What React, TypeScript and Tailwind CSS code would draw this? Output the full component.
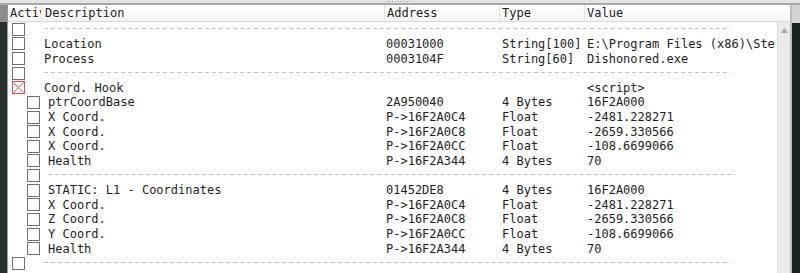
import React from "react";

type Row = {
  sep?: boolean;
  level: 0 | 1;
  checked?: boolean;
  desc?: string;
  addr?: string;
  type?: string;
  value?: string;
};

const rows: Row[] = [
  { sep: true, level: 0 },
  { level: 0, desc: "Location", addr: "00031000", type: "String[100]", value: "E:\\Program Files (x86)\\Steam\\steamapps\\common\\Dishonored" },
  { level: 0, desc: "Process", addr: "0003104F", type: "String[60]", value: "Dishonored.exe" },
  { sep: true, level: 0 },
  { level: 0, checked: true, desc: "Coord. Hook", addr: "", type: "", value: "<script>" },
  { level: 1, desc: "ptrCoordBase", addr: "2A950040", type: "4 Bytes", value: "16F2A000" },
  { level: 1, desc: "X Coord.", addr: "P->16F2A0C4", type: "Float", value: "-2481.228271" },
  { level: 1, desc: "X Coord.", addr: "P->16F2A0C8", type: "Float", value: "-2659.330566" },
  { level: 1, desc: "X Coord.", addr: "P->16F2A0CC", type: "Float", value: "-108.6699066" },
  { level: 1, desc: "Health", addr: "P->16F2A344", type: "4 Bytes", value: "70" },
  { sep: true, level: 1 },
  { level: 1, desc: "STATIC: L1 - Coordinates", addr: "01452DE8", type: "4 Bytes", value: "16F2A000" },
  { level: 1, desc: "X Coord.", addr: "P->16F2A0C4", type: "Float", value: "-2481.228271" },
  { level: 1, desc: "Z Coord.", addr: "P->16F2A0C8", type: "Float", value: "-2659.330566" },
  { level: 1, desc: "Y Coord.", addr: "P->16F2A0CC", type: "Float", value: "-108.6699066" },
  { level: 1, desc: "Health", addr: "P->16F2A344", type: "4 Bytes", value: "70" },
  { sep: true, level: 0 },
];

function Checkbox({ checked }: { checked?: boolean }) {
  if (checked) {
    return (
      <div className="w-[13px] h-[13px] border border-[#e05050] bg-white shrink-0">
        <svg width="11" height="11" viewBox="0 0 11 11" className="block">
          <line x1="0.5" y1="0.5" x2="10.5" y2="10.5" stroke="#e86060" strokeWidth="1" />
          <line x1="10.5" y1="0.5" x2="0.5" y2="10.5" stroke="#e86060" strokeWidth="1" />
        </svg>
      </div>
    );
  }
  return <div className="w-[13px] h-[13px] border border-[#707070] bg-white shrink-0" />;
}

function Dashes() {
  return (
    <svg width="687" height="1" className="block">
      <line x1="0" y1="0.5" x2="687" y2="0.5" stroke="#c2c2c2" strokeWidth="1" strokeDasharray="4 3" />
    </svg>
  );
}

export default function App() {
  return (
    <div
      className="w-[800px] h-[273px] flex flex-col overflow-hidden bg-[#1d2824] text-[12px] text-[#1e1e1e]"
      style={{ fontFamily: '"DejaVu Sans Mono", "Liberation Mono", monospace' }}
    >
      <div className="h-[3px] shrink-0 bg-[#e4e4e4] relative">
        <svg width="26" height="1" className="absolute left-[386px] top-[1px]">
          <line x1="0" y1="0.5" x2="26" y2="0.5" stroke="#a0a0a0" strokeDasharray="1 2" />
        </svg>
      </div>
      <div className="h-[2px] shrink-0 bg-[#a8a8a8]" />
      <div className="flex-1 flex min-h-0">
        <div className="w-[7px] shrink-0 flex flex-col">
          <div className="h-[17px] bg-[#8a8f8c]" />
          <div className="flex-1 bg-[#26302c]" />
        </div>
        <div className="w-[783px] shrink-0 flex flex-col bg-white border-l border-[#9a9a9a]">
          <div className="h-[17px] shrink-0 flex items-center bg-gradient-to-b from-white to-[#f4f4f4] border-b border-[#d8d8d8] whitespace-nowrap">
            <div className="w-[34px] h-full pl-[2px] overflow-hidden flex items-center border-r border-[#e2e2e2]">Active</div>
            <div className="w-[343px] h-full pl-[3px] flex items-center border-r border-[#e2e2e2]">Description</div>
            <div className="w-[115px] h-full pl-[2px] flex items-center border-r border-[#e2e2e2]">Address</div>
            <div className="w-[85px] h-full pl-[2px] flex items-center border-r border-[#e2e2e2]">Type</div>
            <div className="w-[205px] h-full pl-[2px] flex items-center">Value</div>
          </div>
          <div className="flex-1 flex min-h-0">
            <div className="w-[769px] shrink-0 flex flex-col overflow-hidden whitespace-nowrap">
              {rows.map((r, i) => (
                <div key={i} className="h-[14.64px] shrink-0 flex items-center">
                  <div className="w-[36px] shrink-0 flex items-center">
                    <div className={r.level === 0 ? "ml-[4px]" : "ml-[19px]"}>
                      <Checkbox checked={r.checked} />
                    </div>
                  </div>
                  {r.sep ? (
                    <div className={(r.level === 0 ? "ml-0" : "ml-[4px]") + " mb-[2px] shrink-0"}>
                      <Dashes />
                    </div>
                  ) : (
                    <>
                      <div className={(r.level === 0 ? "pl-0" : "pl-[4px]") + " w-[341px] shrink-0 overflow-hidden"}>{r.desc}</div>
                      <div className="w-[116px] shrink-0 pl-[1px] overflow-hidden">{r.addr}</div>
                      <div className="w-[85px] shrink-0 pl-[1px] overflow-hidden">{r.type}</div>
                      <div className="w-[189px] shrink-0 pl-[1px] overflow-hidden">{r.value}</div>
                    </>
                  )}
                </div>
              ))}
            </div>
            <div className="w-[13px] shrink-0 bg-[#ebebeb] border-l border-[#dcdcdc] flex flex-col items-center pt-[6px]">
              <svg width="7" height="5" viewBox="0 0 7 5" className="block">
                <polygon points="3.5,0 7,5 0,5" fill="#a8a8a8" />
              </svg>
            </div>
          </div>
        </div>
        <div className="w-[2px] shrink-0 bg-[#bcbcbc]" />
        <div className="w-[8px] shrink-0 flex flex-col">
          <div className="h-[18px] bg-[#d4d4d4]" />
          <div className="flex-1 bg-[#17221f]" />
        </div>
      </div>
    </div>
  );
}
